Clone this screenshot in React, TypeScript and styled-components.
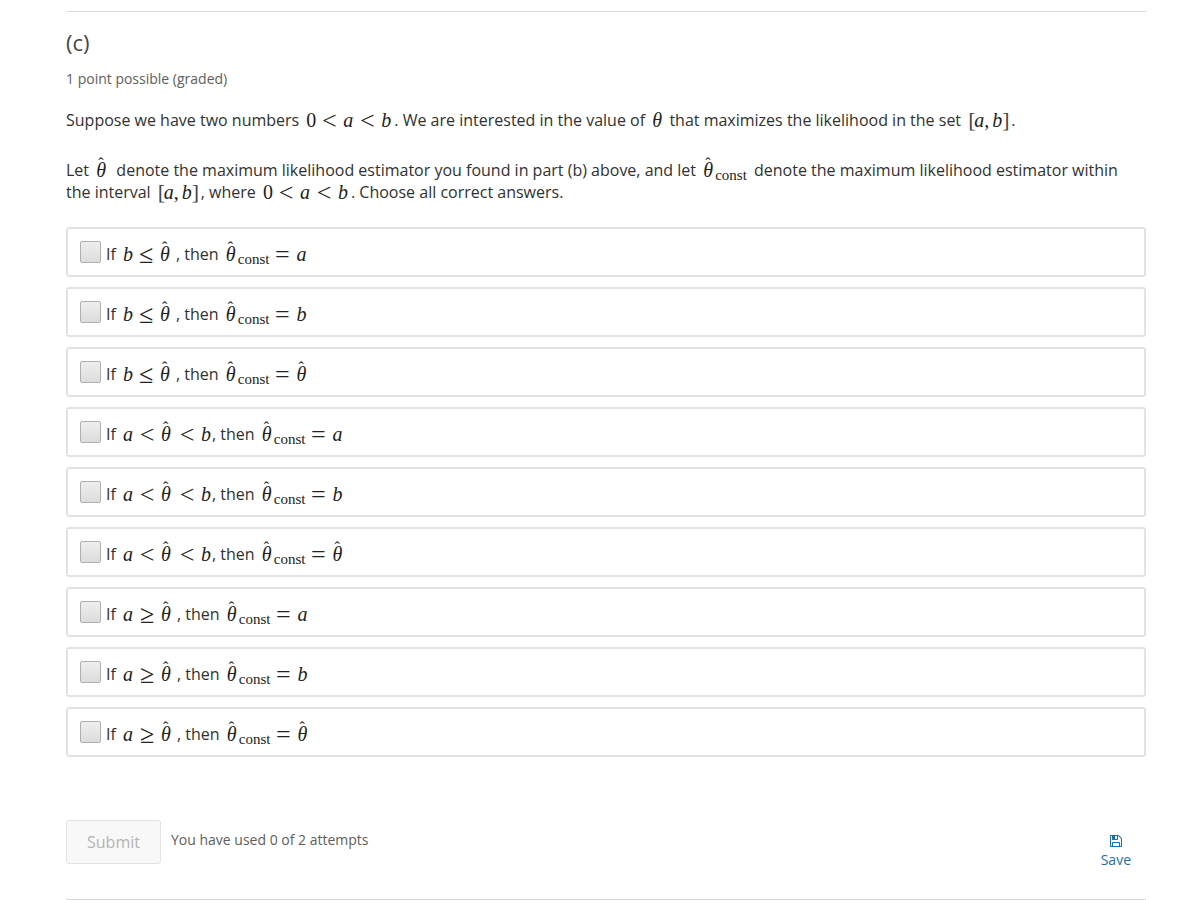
import React from "react";
import styled, { createGlobalStyle } from "styled-components";

const GlobalStyle = createGlobalStyle`
  * { box-sizing: border-box; }
  body {
    margin: 0;
    background: #fff;
    color: #313131;
    font-family: "Open Sans", "Noto Sans", sans-serif;
    font-size: 16px;
    line-height: 22px;
  }
`;

const Page = styled.main`
  padding: 11px 31px 0 66px;
`;

const Problem = styled.section`
  border-top: 1px solid #d9d9d9;
  border-bottom: 1px solid #d9d9d9;
  padding: 18px 0 28px;
`;

const Title = styled.h3`
  margin: 0;
  font-size: 22px;
  font-weight: 400;
  line-height: 24px;
  color: #474747;
`;

const Progress = styled.p`
  margin: 13px 0 18px;
  font-size: 14px;
  line-height: 24px;
  color: #5e5e5e;
`;

const Paragraph = styled.p`
  margin: 0 0 24px;
  & + & {
    margin-top: 28px;
  }
`;

const Choices = styled.fieldset`
  display: flex;
  flex-direction: column;
  gap: 10px;
  margin: 0;
  padding: 0;
  border: 0;
  min-width: 0;
`;

const Choice = styled.label`
  display: flex;
  align-items: center;
  height: 50px;
  padding: 0 12px;
  border: 2px solid #e2e2e2;
  border-radius: 3px;
  cursor: pointer;
`;

const Tick = styled.input`
  appearance: none;
  flex: none;
  width: 21px;
  height: 22px;
  margin: 0 5px 0 0;
  border: 1px solid #b0b0b0;
  border-radius: 2px;
  background: linear-gradient(#eee, #dcdcdc);
  &:checked {
    background: #0075b4;
  }
`;

const ChoiceText = styled.span`
  padding-top: 4px;
  white-space: nowrap;
`;

const Math = styled.span<{ $end?: number }>`
  margin-left: 3px;
  margin-right: ${(p) => p.$end ?? 3}px;
  font-family: "Liberation Serif", serif;
  font-size: 20px;
  line-height: 0;
  vertical-align: -1px;
  white-space: nowrap;
  color: #222;
`;

const Var = styled.i<{ $wide?: boolean }>`
  display: inline-block;
  width: ${(p) => (p.$wide ? 11 : 10)}px;
`;

const Rel = styled.span`
  display: inline-block;
  width: 16px;
  margin: 0 6px 0 5px;
  font-size: 26px;
  text-align: center;
  vertical-align: -2px;
`;

const Bracket = styled.span`
  display: inline-block;
  width: 6px;
  font-size: 22px;
  color: #444;
`;

const Comma = styled.span`
  margin-right: 3px;
`;

const Hatted = styled.i`
  display: inline-block;
  position: relative;
  width: 13px;
`;

const HatMark = styled.span`
  position: absolute;
  left: 2px;
  top: -6px;
  font-size: 16px;
  font-style: normal;
`;

const Sub = styled.sub`
  margin-left: -1px;
  font-size: 15px;
  vertical-align: -3px;
`;

const Actions = styled.div`
  display: flex;
  align-items: flex-start;
  gap: 10px;
  margin-top: 63px;
`;

const Submit = styled.button`
  width: 95px;
  height: 44px;
  border: 1px solid #e3e3e3;
  border-radius: 3px;
  background: #f8f8f8;
  color: #b4b4b4;
  font: inherit;
`;

const Attempts = styled.span`
  padding-top: 9px;
  font-size: 14px;
  color: #5e5e5e;
`;

const Save = styled.button`
  display: flex;
  flex-direction: column;
  align-items: center;
  gap: 2px;
  margin-left: auto;
  padding: 15px 15px 0;
  border: 0;
  background: none;
  color: #1f6ea8;
  font: inherit;
  font-size: 14px;
  line-height: 22px;
  cursor: pointer;
`;

const Hat = () => (
  <Hatted>
    θ<HatMark>ˆ</HatMark>
  </Hatted>
);

const Interval = () => (
  <Math>
    <Bracket>[</Bracket>
    <Var>a</Var>
    <Comma>,</Comma>
    <Var>b</Var>
    <Bracket>]</Bracket>
  </Math>
);

const Range = () => (
  <Math>
    0
    <Rel>&lt;</Rel>
    <Var $wide>a</Var>
    <Rel>&lt;</Rel>
    <Var>b</Var>
  </Math>
);

const HatConst = () => (
  <>
    <Hat />
    <Sub>const</Sub>
  </>
);

const conditions = [
  { id: "below", math: <Math><Var>b</Var><Rel>≤</Rel><Hat /></Math> },
  { id: "inside", math: <Math $end={1}><Var $wide>a</Var><Rel>&lt;</Rel><Hat /><Rel>&lt;</Rel><Var>b</Var></Math> },
  { id: "above", math: <Math><Var $wide>a</Var><Rel>≥</Rel><Hat /></Math> },
];

const results = [
  { id: "a", math: <Var $wide>a</Var> },
  { id: "b", math: <Var>b</Var> },
  { id: "theta", math: <Hat /> },
];

const SaveIcon = () => (
  <svg width="12" height="12" viewBox="128 128 1536 1536" fill="currentColor" aria-hidden="true">
    <path d="M512 1536h768v-384h-768v384zm896 0h128v-896q0-14-10-38.500t-20-34.500l-281-281q-10-10-34-20t-39-10v416q0 40-28 68t-68 28h-576q-40 0-68-28t-28-68v-416h-128v1280h128v-416q0-40 28-68t68-28h832q40 0 68 28t28 68v416zm-384-928v-320q0-13-9.500-22.500t-22.500-9.500h-192q-13 0-22.500 9.500t-9.500 22.500v320q0 13 9.500 22.500t22.500 9.500h192q13 0 22.500-9.500t9.500-22.500zm640 32v928q0 40-28 68t-68 28h-1344q-40 0-68-28t-28-68v-1344q0-40 28-68t68-28h928q40 0 88 20t76 48l280 280q28 28 48 76t20 88z" />
  </svg>
);

export default function App() {
  return (
    <Page>
      <GlobalStyle />
      <Problem>
        <Title>(c)</Title>
        <Progress>1 point possible (graded)</Progress>
        <Paragraph>
          Suppose we have two numbers <Range />. We are interested in the value of{" "}
          <Math><Var>θ</Var></Math> that maximizes the likelihood in the set <Interval />.
        </Paragraph>
        <Paragraph>
          Let <Math><Hat /></Math> denote the maximum likelihood estimator you found in part (b)
          above, and let <Math><HatConst /></Math> denote the maximum likelihood estimator within
          the interval <Interval />, where <Range />. Choose all correct answers.
        </Paragraph>
        <Choices aria-label="Correct answers">
          {conditions.map((condition) =>
            results.map((result) => (
              <Choice key={condition.id + result.id}>
                <Tick type="checkbox" name="answer" value={condition.id + "-" + result.id} />
                <ChoiceText>
                  If {condition.math}, then{" "}
                  <Math><HatConst /><Rel>=</Rel>{result.math}</Math>
                </ChoiceText>
              </Choice>
            ))
          )}
        </Choices>
        <Actions>
          <Submit type="button" disabled>Submit</Submit>
          <Attempts>You have used 0 of 2 attempts</Attempts>
          <Save type="button">
            <SaveIcon />
            Save
          </Save>
        </Actions>
      </Problem>
    </Page>
  );
}
